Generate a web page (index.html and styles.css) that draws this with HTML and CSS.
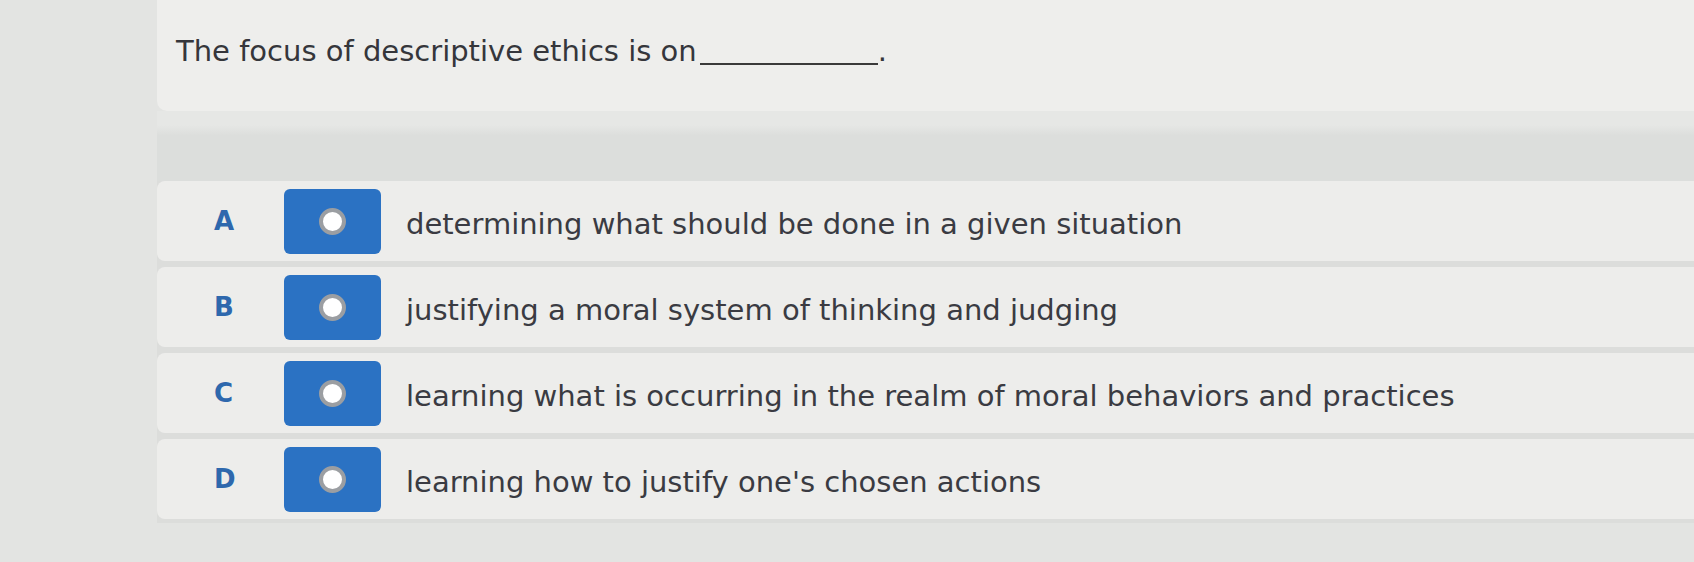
FILE: index.html
```html
<!DOCTYPE html>
<html lang="en">
<head>
<meta charset="utf-8">
<title>Question</title>
<link rel="stylesheet" href="styles.css">
</head>
<body>
<div class="page">
  <div class="question">
    <p class="prompt">The focus of descriptive ethics is on<span class="blank"></span>.</p>
  </div>
  <div class="band"></div>
  <div class="options">
    <div class="option">
      <span class="letter">A</span>
      <span class="btn"><span class="dot"></span></span>
      <span class="text">determining what should be done in a given situation</span>
    </div>
    <div class="option">
      <span class="letter">B</span>
      <span class="btn"><span class="dot"></span></span>
      <span class="text">justifying a moral system of thinking and judging</span>
    </div>
    <div class="option">
      <span class="letter">C</span>
      <span class="btn"><span class="dot"></span></span>
      <span class="text">learning what is occurring in the realm of moral behaviors and practices</span>
    </div>
    <div class="option">
      <span class="letter">D</span>
      <span class="btn"><span class="dot"></span></span>
      <span class="text">learning how to justify one's chosen actions</span>
    </div>
  </div>
</div>
</body>
</html>
```
FILE: styles.css
```css
* { box-sizing: border-box; }
html, body { margin: 0; padding: 0; }
body {
  background: #e3e4e2;
  font-family: "DejaVu Sans", Verdana, sans-serif;
  color: #3a3b40;
  width: 1694px;
  height: 562px;
  overflow: hidden;
}
.page {
  padding-left: 157px;
}
.question {
  background: #eeeeec;
  height: 111px;
  border-bottom-left-radius: 10px;
  padding: 33px 0 0 19px;
}
.prompt {
  margin: 0;
  font-size: 29px;
  line-height: 36px;
  color: #35363b;
}
.blank {
  display: inline-block;
  width: 178px;
  margin-left: 3px;
  border-bottom: 2px solid #3a3a3a;
  vertical-align: -4px;
}
.band {
  height: 70px;
  background: linear-gradient(to bottom, #e6e7e5 0%, #e6e7e5 20%, #dcdedc 35%, #dcdedc 100%);
}
.options {
  display: flex;
  flex-direction: column;
  gap: 6px;
  background: #dcdddb;
  padding-bottom: 4px;
}
.option {
  height: 80px;
  background: #ededeb;
  border-radius: 8px 0 0 8px;
  display: flex;
  align-items: center;
}
.letter {
  width: 70px;
  margin-left: 57px;
  font-weight: bold;
  font-size: 26px;
  color: #2e68ad;
}
.btn {
  width: 97px;
  height: 65px;
  background: #2b72c3;
  border-radius: 6px;
  display: flex;
  align-items: center;
  justify-content: center;
}
.dot {
  width: 27px;
  height: 27px;
  border-radius: 50%;
  background: #ffffff;
  border: 4px solid #9b9ea2;
}
.text {
  margin-left: 25px;
  font-size: 29px;
  color: #3a3b42;
  padding-top: 6px;
}
```
